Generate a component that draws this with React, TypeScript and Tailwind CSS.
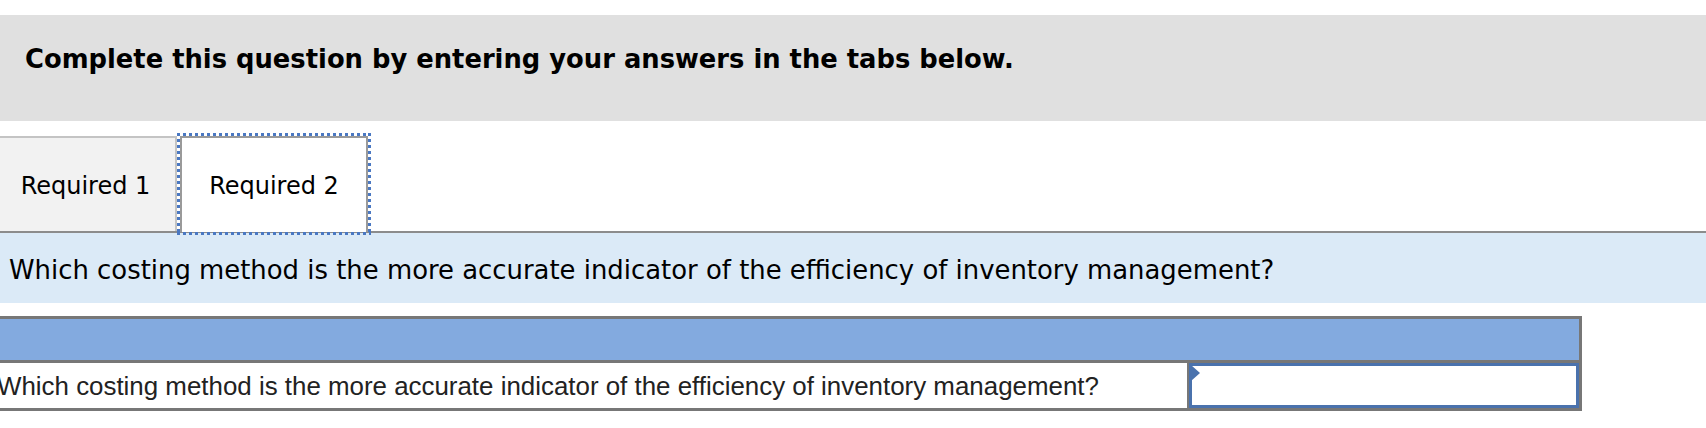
import React from 'react';

const question = 'Which costing method is the more accurate indicator of the efficiency of inventory management?';

export default function App() {
    return (
        <div className="w-[1706px] h-[428px] bg-white overflow-hidden font-['DejaVu_Sans',Verdana,sans-serif] text-black">
            <div className="h-[15px]" />

            {/* Instructions */}
            <div className="h-[106px] bg-[#e0e0e0] flex items-center pl-[25px] pb-[18px]">
                <h2 className="text-[25.8px] font-bold">
                    Complete this question by entering your answers in the tabs below.
                </h2>
            </div>

            {/* Tabs */}
            <div className="h-[15px]" />
            <div className="flex h-[97px] border-b-2 border-[#8c8c8c]">
                <button className="w-[177px] h-full bg-[#f2f2f2] border-t-2 border-r-2 border-[#c4c4c4] text-[24px] pr-[4px] pt-[3px]">
                    Required 1
                </button>
                <div className="w-[194px] h-[102px] -mt-[3px] p-[3px] [background:repeating-linear-gradient(90deg,#4a78c2_0_3px,transparent_3px_6px)_top/100%_3px_no-repeat,repeating-linear-gradient(90deg,#4a78c2_0_3px,transparent_3px_6px)_bottom/100%_3px_no-repeat,repeating-linear-gradient(180deg,#4a78c2_0_3px,transparent_3px_6px)_left/3px_100%_no-repeat,repeating-linear-gradient(180deg,#4a78c2_0_3px,transparent_3px_6px)_right/3px_100%_no-repeat]">
                    <button className="w-full h-full bg-white border-2 border-b-0 border-[#9a9a9a] text-[24px] pt-[2px]">
                        Required 2
                    </button>
                </div>
            </div>

            {/* Prompt */}
            <div className="h-[70px] bg-[#dbeaf7] flex items-center pl-[9px] pt-[4px]">
                <p className="text-[25.9px]">{question}</p>
            </div>

            {/* Answer table */}
            <div className="h-[13px]" />
            <div className="w-[1582px] border-t-[3px] border-r-[3px] border-b-[3px] border-[#777]">
                <div className="h-[44px] bg-[#83aadf] border-b-[3px] border-[#777]" />
                <div className="flex h-[45px]">
                    <div className="flex-1 flex items-center -ml-[3px] pt-[2px] font-['Liberation_Sans',Arial,sans-serif] text-[25.9px] text-[#222] border-r-2 border-[#777]">
                        {question}
                    </div>
                    <div className="relative w-[390px] border-[3px] border-[#4a72ad] bg-white">
                        <span className="absolute -top-[1px] -left-[1px] w-0 h-0 border-y-[8px] border-y-transparent border-l-[9px] border-l-[#4a72ad]" />
                    </div>
                </div>
            </div>
        </div>
    );
}
